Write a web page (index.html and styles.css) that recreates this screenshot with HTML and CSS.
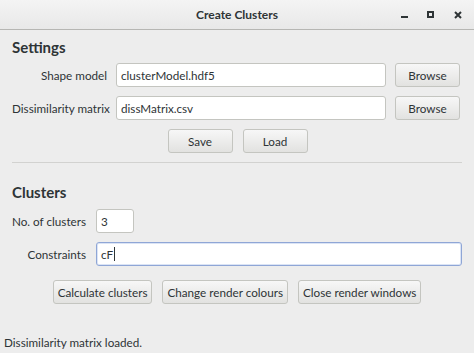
FILE: index.html
```html
<!DOCTYPE html>
<html lang="en">
<head>
    <meta charset="UTF-8">
    <title>Create Clusters</title>
    <link rel="stylesheet" href="styles.css">
</head>
<body>
    <div class="window">
        <div class="titlebar">
            <span class="title">Create Clusters</span>
            <div class="controls">
                <span class="ctl ctl-min"></span>
                <span class="ctl ctl-max"></span>
                <svg class="ctl-close" width="10" height="10" viewBox="0 0 10 10">
                    <path d="M2 2 L8 8 M8 2 L2 8" stroke="#2e3436" stroke-width="2"/>
                </svg>
            </div>
        </div>

        <div class="content">
            <h2 class="section-title">Settings</h2>
            <div class="form-grid settings-grid">
                <label class="field-label">Shape model</label>
                <input class="text-input" type="text" value="clusterModel.hdf5">
                <button class="btn">Browse</button>

                <label class="field-label">Dissimilarity matrix</label>
                <input class="text-input" type="text" value="dissMatrix.csv">
                <button class="btn">Browse</button>
            </div>
            <div class="button-row save-row">
                <button class="btn btn-wide">Save</button>
                <button class="btn btn-wide">Load</button>
            </div>

            <hr class="separator">

            <h2 class="section-title clusters-title">Clusters</h2>
            <div class="form-grid clusters-grid">
                <label class="field-label">No. of clusters</label>
                <input class="text-input small-input" type="text" value="3">

                <label class="field-label">Constraints</label>
                <div class="text-input focused">cF<span class="caret"></span></div>
            </div>
            <div class="button-row action-row">
                <button class="btn">Calculate clusters</button>
                <button class="btn">Change render colours</button>
                <button class="btn">Close render windows</button>
            </div>
        </div>

        <div class="statusbar">Dissimilarity matrix loaded.</div>
    </div>
</body>
</html>
```

FILE: styles.css
```css
body {
    margin: 0;
    padding: 0;
    background-color: #ededed;
    font-family: 'Lato', 'Open Sans', sans-serif;
    font-size: 11.7px;
    color: #2e3436;
}

.window {
    width: 474px;
    height: 353px;
    display: flex;
    flex-direction: column;
    background-color: #ededed;
    overflow: hidden;
}

.titlebar {
    height: 29px;
    position: relative;
    display: flex;
    align-items: center;
    justify-content: center;
    background: linear-gradient(#f4f4f4, #e8e8e8);
    border-bottom: 1px solid #b6b6b3;
    flex-shrink: 0;
}

.title {
    font-weight: bold;
    font-size: 12px;
    color: #2e3436;
}

.controls {
    position: absolute;
    right: 11px;
    top: 0;
    height: 29px;
    display: flex;
    align-items: center;
    gap: 19px;
}

.ctl {
    display: block;
    box-sizing: border-box;
}

.ctl-min {
    width: 7px;
    height: 2px;
    background: #2e3436;
    margin-top: 5px;
}

.ctl-max {
    width: 7px;
    height: 7px;
    border: 2px solid #2e3436;
    margin-top: -1px;
}

.ctl-close {
    display: block;
}

.content {
    padding: 8px 12px 0 12px;
    flex: 1;
}

.section-title {
    margin: 0;
    font-size: 15px;
    font-weight: bold;
    line-height: 18px;
}

.form-grid {
    display: grid;
    align-items: center;
    row-gap: 9px;
}

.settings-grid {
    margin-top: 7px;
    grid-template-columns: 95px 270px 65px;
    column-gap: 9px;
}

.clusters-grid {
    margin-top: 8px;
    grid-template-columns: 74px 1fr;
    column-gap: 10px;
}

.field-label {
    text-align: right;
    white-space: nowrap;
}

.text-input {
    box-sizing: border-box;
    height: 24px;
    margin: 0;
    padding: 0 4px;
    border: 1px solid #c4c5c0;
    border-radius: 3px;
    background: #ffffff;
    font-family: inherit;
    font-size: 11.7px;
    color: #2e3436;
    width: 100%;
    display: flex;
    align-items: center;
    outline: none;
}

.small-input {
    width: 38px;
}

.focused {
    border-color: #8fa6d6;
    box-shadow: inset 0 0 0 1px #dbe4f5;
}

.caret {
    display: inline-block;
    width: 1px;
    height: 14px;
    background: #2e3436;
    margin-left: 1px;
}

.btn {
    box-sizing: border-box;
    height: 24px;
    padding: 0 4px;
    border: 1px solid #c4c5c0;
    border-radius: 3px;
    background: linear-gradient(#f7f7f7, #e2e2e0);
    font-family: inherit;
    font-size: 11.7px;
    color: #2e3436;
    white-space: nowrap;
}

.button-row {
    display: flex;
    justify-content: center;
    gap: 10px;
}

.save-row {
    margin-top: 9px;
    margin-left: 1px;
}

.btn-wide {
    width: 65px;
}

.separator {
    margin: 9px 0 0 0;
    border: none;
    border-top: 1px solid #d2d2d0;
    height: 0;
}

.clusters-title {
    margin-top: 20px;
}

.action-row {
    margin-top: 14px;
}

.statusbar {
    padding: 0 4px 3px 4px;
    font-size: 11.7px;
    line-height: 16px;
}
```
